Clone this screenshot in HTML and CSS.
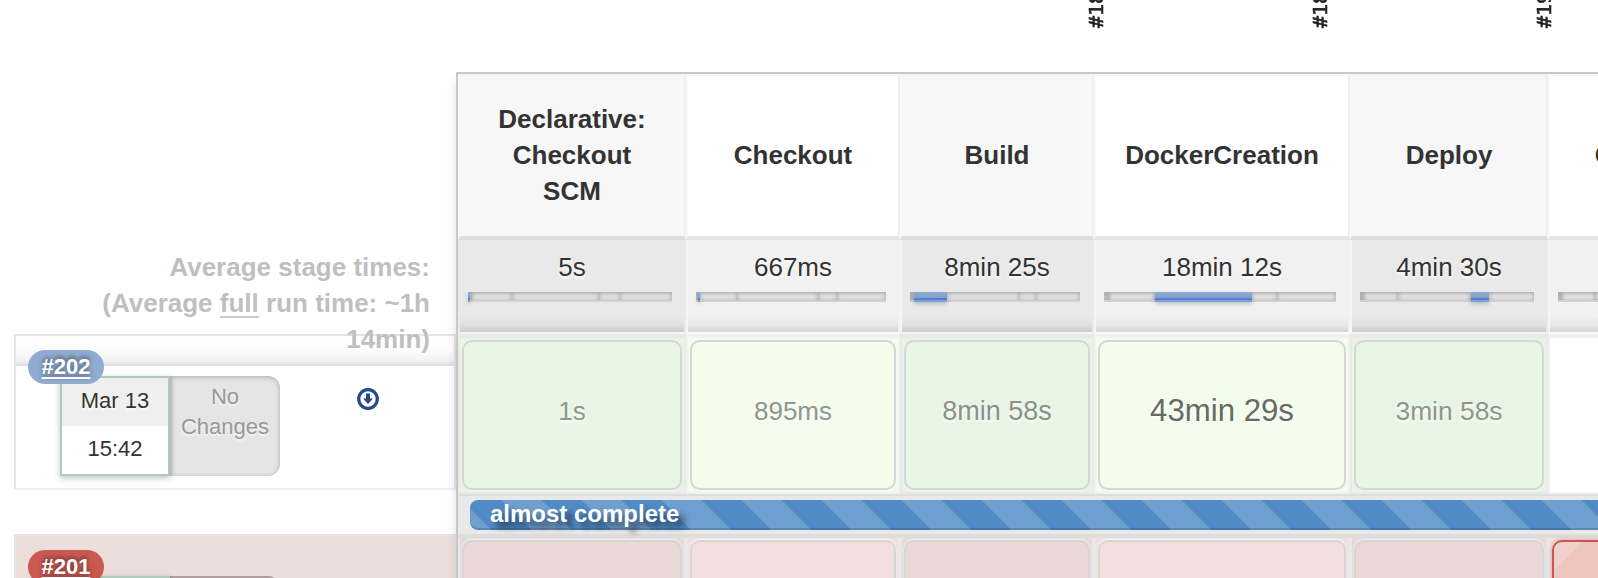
FILE: index.html
```
<!DOCTYPE html>
<html lang="en">
<head>
    <meta charset="UTF-8">
    <meta name="viewport" content="width=device-width, initial-scale=1.0">
    <title>Stage View</title>
    <link rel="stylesheet" href="styles.css">
</head>
<body>

<div class="trend-axis">
    <span class="tick">#18</span>
    <span class="tick">#18</span>
    <span class="tick">#19</span>
</div>

<div class="pipeline">
    <div class="runs">
        <div class="legend">
            Average stage times:<br>
            (Average <span class="full">full</span> run time: ~1h<br>
            14min)
        </div>

        <div class="run">
            <a class="badge">#202</a>
            <div class="run-info">
                <div class="date">
                    <div class="day">Mar 13</div>
                    <div class="time">15:42</div>
                </div>
                <div class="changes">No<br>Changes</div>
                <svg class="download" viewBox="0 0 22 22">
                    <circle cx="11" cy="11" r="9.3" fill="none" stroke="#244a87" stroke-width="3.2"/>
                    <path d="M9 5.5h4v5h3l-5 5.5-5-5.5h3z" fill="#244a87"/>
                </svg>
            </div>
        </div>

        <div class="run failed">
            <a class="badge">#201</a>
            <div class="run-info">
                <div class="date"></div>
                <div class="changes"></div>
            </div>
        </div>
    </div>

    <div class="stages">
        <div class="row header">
            <div class="cell">Declarative:<br>Checkout<br>SCM</div>
            <div class="cell">Checkout</div>
            <div class="cell">Build</div>
            <div class="cell">DockerCreation</div>
            <div class="cell">Deploy</div>
            <div class="cell">Cleanup</div>
        </div>

        <div class="row averages">
            <div class="cell">
                <div class="inner">
                    <div class="avg">5s</div>
                    <div class="bar"><i class="s1 on"></i><i class="s2"></i><i class="s3"></i><i class="s4"></i><i class="s5"></i><i class="s6"></i></div>
                </div>
            </div>
            <div class="cell">
                <div class="inner">
                    <div class="avg">667ms</div>
                    <div class="bar"><i class="s1"></i><i class="s2 on"></i><i class="s3"></i><i class="s4"></i><i class="s5"></i><i class="s6"></i></div>
                </div>
            </div>
            <div class="cell">
                <div class="inner">
                    <div class="avg">8min 25s</div>
                    <div class="bar"><i class="s1"></i><i class="s2"></i><i class="s3 on"></i><i class="s4"></i><i class="s5"></i><i class="s6"></i></div>
                </div>
            </div>
            <div class="cell">
                <div class="inner">
                    <div class="avg">18min 12s</div>
                    <div class="bar"><i class="s1"></i><i class="s2"></i><i class="s3"></i><i class="s4 on"></i><i class="s5"></i><i class="s6"></i></div>
                </div>
            </div>
            <div class="cell">
                <div class="inner">
                    <div class="avg">4min 30s</div>
                    <div class="bar"><i class="s1"></i><i class="s2"></i><i class="s3"></i><i class="s4"></i><i class="s5 on"></i><i class="s6"></i></div>
                </div>
            </div>
            <div class="cell">
                <div class="inner">
                    <div class="avg">&nbsp;</div>
                    <div class="bar"><i class="s1"></i><i class="s2"></i><i class="s3"></i><i class="s4"></i><i class="s5"></i><i class="s6 on"></i></div>
                </div>
            </div>
        </div>

        <div class="row success">
            <div class="cell"><div class="stage">1s</div></div>
            <div class="cell"><div class="stage">895ms</div></div>
            <div class="cell"><div class="stage medium">8min 58s</div></div>
            <div class="cell"><div class="stage slow">43min 29s</div></div>
            <div class="cell"><div class="stage quick">3min 58s</div></div>
            <div class="cell empty"></div>
        </div>

        <div class="progress-row">
            <div class="progress">almost complete</div>
        </div>

        <div class="row failure">
            <div class="cell"><div class="stage"></div></div>
            <div class="cell"><div class="stage"></div></div>
            <div class="cell"><div class="stage"></div></div>
            <div class="cell"><div class="stage"></div></div>
            <div class="cell"><div class="stage"></div></div>
            <div class="cell"><div class="stage broken"></div></div>
        </div>
    </div>
</div>

</body>
</html>
```
FILE: styles.css
```
* {
    box-sizing: border-box;
}

body {
    margin: 0;
    height: 578px;
    overflow: hidden;
    background-color: #fff;
    color: #333;
    font-family: "Liberation Sans", Arial, sans-serif;
    font-size: 26px;
    line-height: 36px;
}

/* build labels under the trend chart */
.trend-axis {
    display: flex;
    gap: 204px;
    height: 72px;
    padding-left: 1086px;
}

.tick {
    width: 20px;
    height: 28px;
    display: flex;
    align-items: center;
    writing-mode: vertical-rl;
    transform: rotate(180deg);
    color: #222;
    font-family: "DejaVu Sans Mono", monospace;
    font-size: 20px;
    line-height: 20px;
    -webkit-text-stroke: 0.6px #222;
}

.pipeline {
    display: grid;
    grid-template-columns: 442px 1300px;
    height: 506px;
    padding-left: 14px;
    overflow: hidden;
}

/* left column */
.legend {
    height: 294px;
    margin-bottom: -32px;
    padding: 177px 26px 0 0;
    text-align: right;
    font-weight: bold;
    color: #bfbfbf;
    background: linear-gradient(to top, #dcdcdc, #f3f3f3 6px, #fbfbfb 14px, rgba(255, 255, 255, 0) 26px);
}

.full {
    border-bottom: 2px solid #cbcbcb;
    display: inline-block;
    line-height: 26px;
}

.run {
    height: 156px;
    margin-bottom: 44px;
    padding: 14px 12px 0;
    border: 2px solid #e5e5e5;
    border-bottom-color: #f0f0f0;
}

.badge {
    display: block;
    position: relative;
    width: 76px;
    height: 34px;
    border-radius: 17px;
    background-color: #90acd0;
    color: #fff;
    text-align: center;
    text-decoration: underline;
    text-underline-offset: 3px;
    text-decoration-thickness: 2px;
    text-decoration-skip-ink: none;
    text-shadow: 0 -2px 4px rgba(0, 0, 0, 0.5);
    font-size: 22px;
    font-weight: bold;
    line-height: 33px;
}

.run-info {
    display: flex;
    margin: -8px 0 0 32px;
    font-size: 22px;
}

.date {
    position: relative;
    width: 110px;
    height: 100px;
    border: 2px solid #aecbbb;
    background-color: #fff;
    text-align: center;
    line-height: 46px;
    box-shadow: 0 2px 6px rgba(0, 0, 0, 0.25);
}

.badge {
    z-index: 1;
}

.day {
    height: 48px;
    background-color: #efefef;
    text-shadow: 0 2px 2px #fff;
}

.changes {
    width: 110px;
    height: 100px;
    padding-top: 6px;
    border-radius: 0 12px 12px 0;
    background-color: #e5e5e5;
    box-shadow: inset 0 1px 5px rgba(0, 0, 0, 0.25);
    color: #999;
    text-align: center;
    text-shadow: 0 2px 3px rgba(255, 255, 255, 0.8);
    line-height: 30px;
}

.download {
    width: 22px;
    height: 22px;
    margin: 12px 0 0 77px;
}

.run.failed {
    background-color: #ecdedb;
}

.failed .badge {
    background-color: #c95a52;
}

.failed .changes {
    background-color: #c9b8b5;
}

/* stage table */
.stages {
    border: 2px solid #c8c8c8;
    background-color: #fff;
    box-shadow: 0 10px 10px rgba(0, 0, 0, 0.13);
}

.row {
    display: grid;
    grid-template-columns: 228px 214px 194px 256px 198px 196px;
}

.cell {
    border: 2px solid #f0f0f0;
    border-left-color: #f8f8f8;
}

.header .cell {
    height: 166px;
    display: flex;
    align-items: center;
    justify-content: center;
    padding-bottom: 2px;
    border-top-color: #f8f8f8;
    border-bottom: 4px solid #e4e4e4;
    text-align: center;
    font-weight: bold;
}

.header .cell:nth-child(odd) {
    background-color: #f7f7f7;
    border-top-color: #f2f2f2;
    border-bottom-color: #dcdcdc;
}

.averages .cell {
    height: 94px;
    border-width: 0 2px 2px;
    border-color: #f1f1f1 #f1f1f1 #fbfbfb;
    background-color: #f1f1f1;
}

.averages .cell:nth-child(odd) {
    background-color: #e9e9e9;
    border-color: #e9e9e9 #e9e9e9 #f3f3f3;
}

.averages .cell + .cell {
    border-left-color: #f5f5f5;
}

.inner {
    height: 92px;
    padding-top: 9px;
    background: linear-gradient(to top, rgba(0, 0, 0, 0.12), rgba(0, 0, 0, 0.04) 7px, transparent 16px);
}

.avg {
    text-align: center;
    text-shadow: 0 2px 3px #fff;
}

.bar {
    display: flex;
    height: 10px;
    margin: 7px 12px 0 8px;
    border-bottom: 2px solid #d0d0d0;
}

.bar i {
    height: 8px;
    background-color: #e3e3e3;
    box-shadow: inset 0 1px 4px rgba(0, 0, 0, 0.3);
}

.bar .s1 { width: 1.1%; }
.bar .s2 { width: 1.1%; }
.bar .s3 { width: 19.6%; }
.bar .s4 { width: 42.2%; }
.bar .s5 { width: 10.4%; }
.bar .s6 { width: 25.6%; }

.bar .on {
    height: 10px;
    min-width: 2px;
    background: linear-gradient(#8dabd0, #7fa2d2 55%, #5580c8 65%, #5580c8 80%, #7ba0dc 81%);
    box-shadow: 0 2px 4px rgba(0, 0, 0, 0.2);
}

.success .cell {
    height: 160px;
    padding: 2px;
    border-width: 4px 2px 2px;
    border-color: #f1f1f1;
    background-color: #f2fdec;
}

.success .cell:nth-child(odd) {
    border-color: #e9e9e9;
    background-color: #e9f5e4;
}

.success .cell.empty {
    background-color: #fff;
}

.stage {
    height: 150px;
    border: 2px solid #d6d6d6;
    border-radius: 10px;
    color: #8f968d;
    text-align: center;
    text-shadow: 0 2px 3px #fff;
    line-height: 138px;
}

.quick {
    font-size: 26.4px;
}

.medium {
    color: #8a9188;
    font-size: 27px;
}

.slow {
    color: #666b64;
    font-size: 31.2px;
}

.progress-row {
    height: 44px;
    padding: 4px 0 4px 12px;
    border: solid #ddd;
    border-width: 2px 0 4px;
    background-color: #e9e9e9;
}

.progress {
    height: 30px;
    padding-left: 20px;
    border-radius: 8px;
    background: linear-gradient(45deg, rgba(255, 255, 255, 0.17) 25%, transparent 25%, transparent 50%, rgba(255, 255, 255, 0.17) 50%, rgba(255, 255, 255, 0.17) 75%, transparent 75%) 32px 0 / 80px 80px #518bc5;
    box-shadow: inset 0 -2px 0 rgba(0, 0, 0, 0.15);
    color: #fff;
    font-size: 24px;
    font-weight: bold;
    line-height: 28px;
    text-shadow: 6px 6px 6px rgba(0, 0, 0, 0.6);
}

.failure .cell {
    height: 160px;
    padding: 2px;
    border-width: 0 2px 2px;
    border-color: #e8e8e8;
    background-color: #f1dfdd;
}

.failure .cell:nth-child(odd) {
    background-color: #e9d8d6;
}

.failure .stage {
    box-shadow: 0 -1px 2px rgba(255, 255, 255, 0.8);
}

.failure .broken {
    border-color: #cc574f;
    background: linear-gradient(135deg, #f0d0cb 0, #f0d0cb 20px, #efc5bf 20px);
    box-shadow: 0 0 4px rgba(204, 87, 79, 0.5);
}
```
